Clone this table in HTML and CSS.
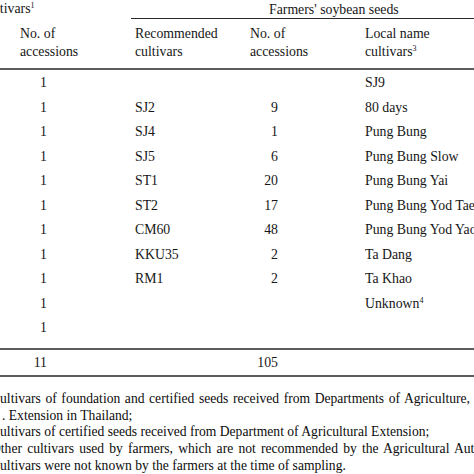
FILE: index.html
```html
<!DOCTYPE html>
<html>
<head>
<meta charset="utf-8">
<link rel="stylesheet" href="styles.css">
</head>
<body>
<div class="page">
  <div class="title">
    <div class="title-left">cultivars<sup>1</sup></div>
    <div class="title-right">Farmers' soybean seeds</div>
  </div>
  <div class="grid head">
    <div>No. of<br>accessions</div>
    <div>Recommended<br>cultivars</div>
    <div>No. of<br>accessions</div>
    <div>Local name<br>cultivars<sup>3</sup></div>
  </div>
  <div class="body">
    <div class="grid row"><div><span class="n1">1</span></div><div></div><div></div><div>SJ9</div></div>
    <div class="grid row"><div><span class="n1">1</span></div><div>SJ2</div><div><span class="n3">9</span></div><div>80 days</div></div>
    <div class="grid row"><div><span class="n1">1</span></div><div>SJ4</div><div><span class="n3">1</span></div><div>Pung Bung</div></div>
    <div class="grid row"><div><span class="n1">1</span></div><div>SJ5</div><div><span class="n3">6</span></div><div>Pung Bung Slow</div></div>
    <div class="grid row"><div><span class="n1">1</span></div><div>ST1</div><div><span class="n3">20</span></div><div>Pung Bung Yai</div></div>
    <div class="grid row"><div><span class="n1">1</span></div><div>ST2</div><div><span class="n3">17</span></div><div>Pung Bung Yod Tae</div></div>
    <div class="grid row"><div><span class="n1">1</span></div><div>CM60</div><div><span class="n3">48</span></div><div>Pung Bung Yod Yao</div></div>
    <div class="grid row"><div><span class="n1">1</span></div><div>KKU35</div><div><span class="n3">2</span></div><div>Ta Dang</div></div>
    <div class="grid row"><div><span class="n1">1</span></div><div>RM1</div><div><span class="n3">2</span></div><div>Ta Khao</div></div>
    <div class="grid row"><div><span class="n1">1</span></div><div></div><div></div><div>Unknown<sup>4</sup></div></div>
    <div class="grid row"><div><span class="n1">1</span></div><div></div><div></div><div></div></div>
  </div>
  <div class="grid total">
    <div><span class="n1">11</span></div><div></div><div><span class="n3">105</span></div><div></div>
  </div>
  <div class="notes">
    <div class="note just1">Cultivars of foundation and certified seeds received from Departments of Agriculture,</div>
    <div class="note cont">. Extension in Thailand;</div>
    <div class="note">Cultivars of certified seeds received from Department of Agricultural Extension;</div>
    <div class="note just2">Other cultivars used by farmers, which are not recommended by the Agricultural Authorities</div>
    <div class="note">Cultivars were not known by the farmers at the time of sampling.</div>
  </div>
</div>
</body>
</html>
```

FILE: styles.css
```css
html, body {
  margin: 0;
  padding: 0;
  background: #ffffff;
}
body {
  width: 474px;
  height: 474px;
  overflow: hidden;
  font-family: "Liberation Serif", "Times New Roman", serif;
  font-size: 13.8px;
  color: #161616;
}
.page {
  width: 474px;
  white-space: nowrap;
}
sup {
  font-size: 8px;
  line-height: 0;
  vertical-align: 5px;
}
.title {
  display: grid;
  grid-template-columns: 131px 1fr;
  height: 18px;
  line-height: 18px;
}
.title-left {
  text-indent: -17px;
}
.title-right {
  padding-left: 138px;
  border-bottom: 1px solid #2a2a2a;
  line-height: 20px;
  height: 18px;
}
.grid {
  display: grid;
  grid-template-columns: 115px 115px 115px 1fr;
  padding-left: 20px;
}
.head {
  margin-top: 1px;
  padding-top: 6px;
  padding-bottom: 7px;
  line-height: 18px;
  border-bottom: 2px solid #5c5c5c;
}
.body {
  padding-top: 1px;
  padding-bottom: 7.5px;
  border-bottom: 2px solid #5c5c5c;
}
.row {
  line-height: 24.5px;
  height: 24.5px;
}
.total {
  line-height: 25px;
  height: 25px;
  border-bottom: 2px solid #5c5c5c;
}
.n1 {
  display: inline-block;
  width: 27px;
  text-align: right;
}
.n3 {
  display: inline-block;
  width: 28px;
  text-align: right;
}
.notes {
  padding-top: 14px;
  font-size: 13.6px;
  line-height: 16.7px;
  color: #0c0c0c;
}
.note {
  text-indent: -9px;
}
.note.cont {
  text-indent: 2px;
}
.note.just1 {
  word-spacing: 1.2px;
}
.note.just2 {
  word-spacing: 1.8px;
}
```
